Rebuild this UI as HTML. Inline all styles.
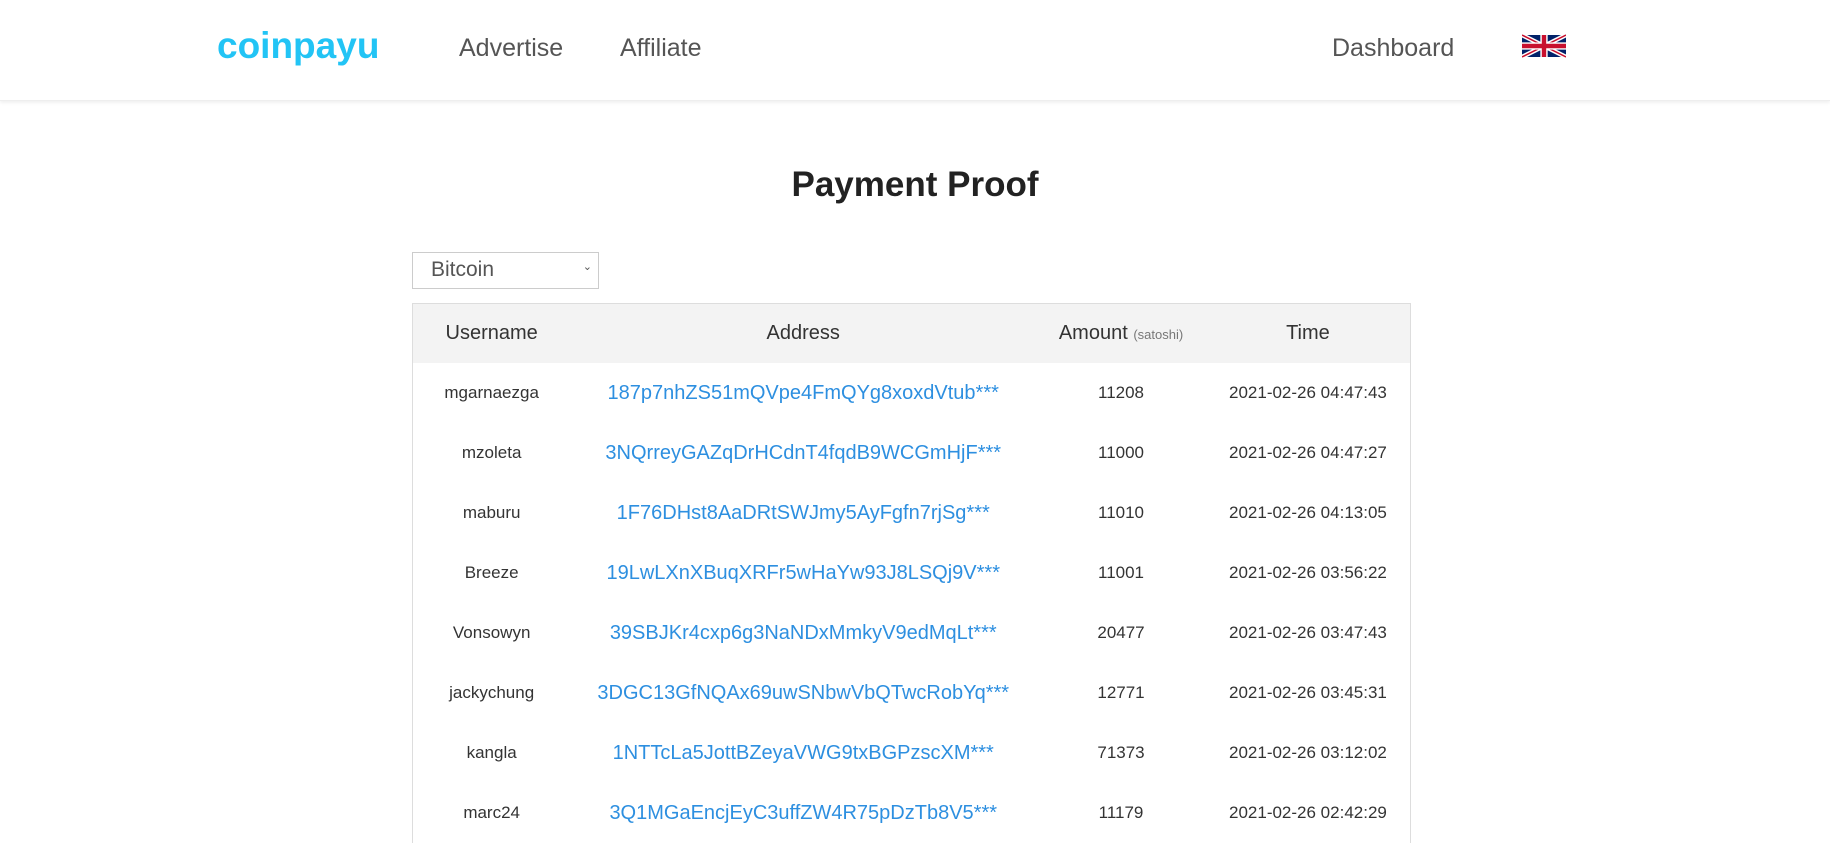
<!DOCTYPE html>
<html><head><meta charset="utf-8"><style>
body{margin:0;background:#fff;font-family:"Liberation Sans",Arial,sans-serif;width:1830px;height:817px;overflow:hidden;position:relative}
.hdr{position:absolute;left:0;top:0;width:1830px;height:100px;background:#fff;box-shadow:0 2px 3px rgba(0,0,0,.06);border-bottom:1px solid #eee}
.a{position:absolute;font-size:25px;color:#555;top:34px}
.logo{position:absolute;left:217px;top:25px;font-size:37px;font-weight:bold;color:#22c4f5;letter-spacing:0}
h1{position:absolute;top:165px;left:0;width:1830px;text-align:center;margin:0;font-size:35px;font-weight:bold;color:#222}
.sel{position:absolute;left:412px;top:252px;width:187px;height:37px;border:1px solid #ccc;font-size:21px;color:#555;box-sizing:border-box;padding:5px 0 0 18px}
.sel span{position:absolute;right:6px;top:7px;font-size:11px}
table{position:absolute;left:412px;top:303px;width:999px;border-collapse:collapse;border:1px solid #ddd;border-bottom:none}
th{background:#f3f3f3;height:59px;font-weight:normal;font-size:20px;color:#333;padding:0}
td{height:60px;text-align:center;font-size:17px;color:#333;padding:0}
td.l{color:#2d8fe0;font-size:20px}
small{font-size:13px;color:#777}
</style></head><body>
<div class="hdr">
<div class="logo">coinpayu</div>
<div class="a" style="left:459px">Advertise</div>
<div class="a" style="left:620px">Affiliate</div>
<div class="a" style="left:1332px">Dashboard</div>
<svg style="position:absolute;left:1522px;top:33px" width="44" height="26" viewBox="0 0 60 30"><rect width="60" height="30" fill="#012169"/><path d="M0,0 L60,30 M60,0 L0,30" stroke="#fff" stroke-width="6"/><path d="M0,0 L60,30 M60,0 L0,30" stroke="#C8102E" stroke-width="2"/><path d="M30,0 V30 M0,15 H60" stroke="#fff" stroke-width="10"/><path d="M30,0 V30 M0,15 H60" stroke="#C8102E" stroke-width="6"/></svg>
</div>
<h1>Payment Proof</h1>
<div class="sel">Bitcoin<span>&#8964;</span></div>
<table>
<colgroup><col style="width:158px"><col style="width:466px"><col style="width:170px"><col style="width:205px"></colgroup>
<tr><th>Username</th><th>Address</th><th>Amount <small>(satoshi)</small></th><th>Time</th></tr>
<tr><td>mgarnaezga</td><td class="l">187p7nhZS51mQVpe4FmQYg8xoxdVtub***</td><td>11208</td><td>2021-02-26 04:47:43</td></tr>
<tr><td>mzoleta</td><td class="l">3NQrreyGAZqDrHCdnT4fqdB9WCGmHjF***</td><td>11000</td><td>2021-02-26 04:47:27</td></tr>
<tr><td>maburu</td><td class="l">1F76DHst8AaDRtSWJmy5AyFgfn7rjSg***</td><td>11010</td><td>2021-02-26 04:13:05</td></tr>
<tr><td>Breeze</td><td class="l">19LwLXnXBuqXRFr5wHaYw93J8LSQj9V***</td><td>11001</td><td>2021-02-26 03:56:22</td></tr>
<tr><td>Vonsowyn</td><td class="l">39SBJKr4cxp6g3NaNDxMmkyV9edMqLt***</td><td>20477</td><td>2021-02-26 03:47:43</td></tr>
<tr><td>jackychung</td><td class="l">3DGC13GfNQAx69uwSNbwVbQTwcRobYq***</td><td>12771</td><td>2021-02-26 03:45:31</td></tr>
<tr><td>kangla</td><td class="l">1NTTcLa5JottBZeyaVWG9txBGPzscXM***</td><td>71373</td><td>2021-02-26 03:12:02</td></tr>
<tr><td>marc24</td><td class="l">3Q1MGaEncjEyC3uffZW4R75pDzTb8V5***</td><td>11179</td><td>2021-02-26 02:42:29</td></tr>
</table>
</body></html>
